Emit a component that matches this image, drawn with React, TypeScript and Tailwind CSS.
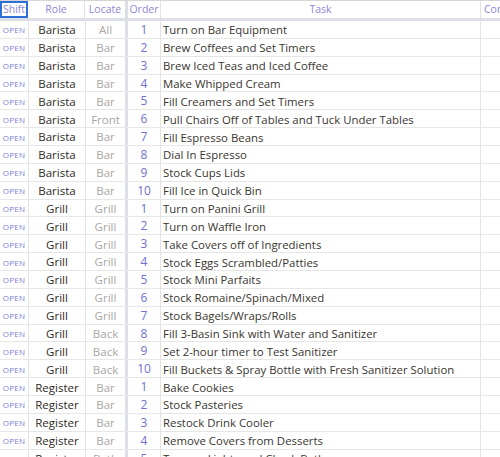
import React from 'react'

type Row = [string, string, number, string]

const rows: Row[] = [
  ['Barista', 'All', 1, 'Turn on Bar Equipment'],
  ['Barista', 'Bar', 2, 'Brew Coffees and Set Timers'],
  ['Barista', 'Bar', 3, 'Brew Iced Teas and Iced Coffee'],
  ['Barista', 'Bar', 4, 'Make Whipped Cream'],
  ['Barista', 'Bar', 5, 'Fill Creamers and Set Timers'],
  ['Barista', 'Front', 6, 'Pull Chairs Off of Tables and Tuck Under Tables'],
  ['Barista', 'Bar', 7, 'Fill Espresso Beans'],
  ['Barista', 'Bar', 8, 'Dial In Espresso'],
  ['Barista', 'Bar', 9, 'Stock Cups Lids'],
  ['Barista', 'Bar', 10, 'Fill Ice in Quick Bin'],
  ['Grill', 'Grill', 1, 'Turn on Panini Grill'],
  ['Grill', 'Grill', 2, 'Turn on Waffle Iron'],
  ['Grill', 'Grill', 3, 'Take Covers off of Ingredients'],
  ['Grill', 'Grill', 4, 'Stock Eggs Scrambled/Patties'],
  ['Grill', 'Grill', 5, 'Stock Mini Parfaits'],
  ['Grill', 'Grill', 6, 'Stock Romaine/Spinach/Mixed'],
  ['Grill', 'Grill', 7, 'Stock Bagels/Wraps/Rolls'],
  ['Grill', 'Back', 8, 'Fill 3-Basin Sink with Water and Sanitizer'],
  ['Grill', 'Back', 9, 'Set 2-hour timer to Test Sanitizer'],
  ['Grill', 'Back', 10, 'Fill Buckets & Spray Bottle with Fresh Sanitizer Solution'],
  ['Register', 'Bar', 1, 'Bake Cookies'],
  ['Register', 'Bar', 2, 'Stock Pasteries'],
  ['Register', 'Bar', 3, 'Restock Drink Cooler'],
  ['Register', 'Bar', 4, 'Remove Covers from Desserts'],
  ['Register', 'Bath', 5, 'Turn on Lights and Check Bathrooms'],
]

const cell = 'h-full flex items-center border-r border-[#e3e3e3] shrink-0'

export default function App() {
  return (
    <div className="w-[500px] h-[457px] overflow-hidden bg-white font-['Open_Sans',sans-serif]">
      {/* header */}
      <div className="flex h-[18px] border-t border-[#d6d6d6] text-[10.5px] text-[#8f86d6]">
        <div className="w-[28px] h-full flex items-center justify-center border-2 border-[#2f6fd8] shrink-0">Shift</div>
        <div className={`${cell} w-[57px] justify-center pt-[1px]`}>Role</div>
        <div className="h-full flex items-center w-[40px] justify-center shrink-0 pt-[1px]">Locate</div>
        <div className="w-[3px] h-full bg-[#dcdfe6] shrink-0" />
        <div className={`${cell} w-[33px] justify-center pt-[1px]`}>Order</div>
        <div className={`${cell} w-[320px] justify-center pt-[1px]`}>Task</div>
        <div className="h-full flex items-center pl-[3px] pt-[1px]">Con</div>
      </div>
      <div className="h-[3px] bg-[#dcdfe6]" />

      {rows.map(([role, loc, order, task], i) => (
        <div key={i} className="flex h-[17.87px] border-b border-[#e6e6e6]">
          <div className={`${cell} w-[29px] justify-center pt-[2px] text-[8px] tracking-[0.2px] text-[#7c80d6]`}>OPEN</div>
          <div className={`${cell} w-[57px] justify-center pt-[1px] text-[11.5px] text-[#2f2a26]`}>{role}</div>
          <div className="h-full flex items-center w-[39px] justify-center shrink-0 pt-[1px] text-[11.5px] text-[#aaa6a3]">{loc}</div>
          <div className="w-[3px] h-full bg-[#dcdfe6] shrink-0" />
          <div className={`${cell} w-[33px] justify-center pt-[1px] text-[12px] text-[#6f6fd2]`}>{order}</div>
          <div className={`${cell} w-[320px] pl-[2px] pt-[1px] text-[11.4px] text-[#3a3530] whitespace-nowrap overflow-hidden`}>{task}</div>
          <div className="h-full flex-1" />
        </div>
      ))}
    </div>
  )
}
